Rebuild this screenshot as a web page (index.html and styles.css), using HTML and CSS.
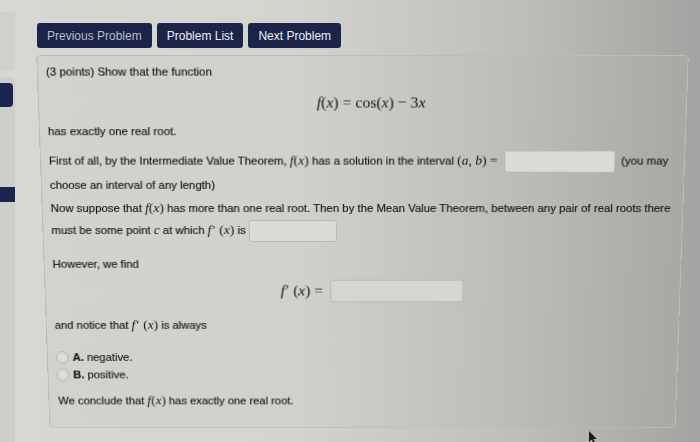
FILE: index.html
```html
<!DOCTYPE html>
<html>
<head>
<meta charset="utf-8">
<link rel="stylesheet" href="styles.css">
</head>
<body>
<div class="page">
  <aside class="side">
    <div class="side-top"></div>
    <div class="side-panel">
      <div class="side-tab"></div>
      <div class="side-bar"></div>
    </div>
  </aside>
  <main class="main">
    <nav class="buttons">
      <span class="btn btn-dim">Previous Problem</span>
      <span class="btn">Problem List</span>
      <span class="btn">Next Problem</span>
    </nav>
    <section class="problem">
      <p class="row r1">(3 points) Show that the function</p>
      <p class="display r2"><span class="m md"><i>f</i>(<i>x</i>) = cos(<i>x</i>) − 3<i>x</i></span></p>
      <p class="row r3">has exactly one real root.</p>
      <p class="para p2">First of all, by the Intermediate Value Theorem, <span class="m"><i>f</i>(<i>x</i>)</span> has a solution in the interval <span class="m">(<i>a</i>, <i>b</i>) =</span> <span class="inp inp1"></span> (you may choose an interval of any length)</p>
      <p class="para p3">Now suppose that <span class="m"><i>f</i>(<i>x</i>)</span> has more than one real root. Then by the Mean Value Theorem, between any pair of real roots there must be some point <i class="c">c</i> at which <span class="m"><i>f</i><span class="pr">′</span>(<i>x</i>)</span> is <span class="inp inp2"></span></p>
      <p class="row r4">However, we find</p>
      <p class="r5"><span class="m md"><i>f</i><span class="pr">′</span>(<i>x</i>) =</span><span class="inp inp3"></span></p>
      <p class="row r6">and notice that <span class="m"><i>f</i><span class="pr">′</span>(<i>x</i>)</span> is always</p>
      <div class="choices">
        <label class="choice"><span class="radio"></span><b>A.</b>&nbsp;negative.</label>
        <label class="choice"><span class="radio"></span><b>B.</b>&nbsp;positive.</label>
      </div>
      <p class="row r7">We conclude that <span class="m"><i>f</i>(<i>x</i>)</span> has exactly one real root.</p>
    </section>
  </main>
</div>
<svg class="cursor" width="10" height="14" viewBox="0 0 10 14"><path d="M1 1 L1 12 L3.6 9.6 L5.6 13.4 L7.2 12.6 L5.3 8.9 L8.8 8.9 Z" fill="#1a1a1a"/></svg>
</body>
</html>
```
FILE: styles.css
```css
html, body {
  margin: 0;
  padding: 0;
}
body {
  position: relative;
  width: 700px;
  height: 442px;
  overflow: hidden;
  background: linear-gradient(90deg, #d9d7d3 0%, #d6d4d0 40%, #bdbdb9 75%, #a3a4a1 100%);
  font-family: "Liberation Sans", Arial, sans-serif;
  color: #161616;
}
.page {
  display: grid;
  grid-template-columns: 15px 1fr;
  column-gap: 22px;
  height: 442px;
}
.side {
  display: flex;
  flex-direction: column;
  padding-top: 12px;
  gap: 7px;
}
.side-top {
  height: 58px;
  background: #d2d0cc;
  border-radius: 0 3px 3px 0;
}
.side-panel {
  flex: 1;
  background: #d0cecb;
  border-radius: 0 4px 0 0;
  padding-top: 6px;
  display: flex;
  flex-direction: column;
}
.side-tab {
  height: 24px;
  width: 13px;
  background: #1b2550;
  border-radius: 0 4px 4px 0;
}
.side-bar {
  height: 15px;
  width: 15px;
  margin-top: 80px;
  background: #1b2550;
}
.main {
  padding-top: 23px;
}
.buttons {
  display: flex;
  gap: 5px;
  height: 25px;
}
.btn {
  display: flex;
  align-items: center;
  padding: 0 10px;
  background: #1c2449;
  color: #eef0f4;
  font-size: 12px;
  border-radius: 3px;
}
.btn-dim {
  color: #b9bdcc;
}
.problem {
  margin-top: 10px;
  margin-left: 6px;
  width: 639px;
  height: 375px;
  box-sizing: border-box;
  padding: 7px 3px 0 8px;
  background: linear-gradient(90deg, #d4d2cd 0%, #d2d0cb 40%, #bbbcb8 75%, #a8a9a5 100%);
  border: 1px solid #bebcb7;
  border-radius: 4px;
  font-size: 11.35px;
  -webkit-text-stroke: 0.15px #161616;
  transform: perspective(900px) rotateX(-5.7deg);
  transform-origin: 50% 50%;
}
.problem p {
  margin: 0;
}
.problem .row {
  line-height: 16px;
}
.m {
  font-family: "Liberation Serif", "Times New Roman", serif;
  font-size: 13.5px;
  -webkit-text-stroke: 0;
}
.md {
  font-size: 15.5px;
}
.m i, .c {
  font-style: italic;
}
.pr {
  padding: 0 4px 0 1px;
}
.c {
  font-family: "Liberation Serif", serif;
  font-size: 13px;
  -webkit-text-stroke: 0;
}
.problem .display {
  text-align: center;
  line-height: 16px;
  padding-left: 12px;
}
.problem .r2 { margin-top: 14px; }
.problem .r3 { margin-top: 11px; }
.problem .para {
  line-height: 24px;
}
.problem .p2 { margin-top: 9px; }
.problem .p3 { margin-top: 0; line-height: 22px; }
.problem .r4 { margin-top: 14px; }
.problem .r5 {
  margin-top: 7px;
  height: 24px;
  display: flex;
  justify-content: center;
  align-items: center;
  gap: 7px;
  padding-left: 14px;
}
.problem .r6 { margin-top: 15px; }
.inp {
  display: inline-block;
  vertical-align: middle;
  height: 22px;
  box-sizing: border-box;
  background: #dcdbd7;
  border: 1px solid #b9b8b3;
  border-radius: 3px;
}
.inp1 { width: 110px; margin: 0 3px; }
.inp2 { width: 88px; }
.inp3 { width: 134px; height: 23px; background: #d6d5d1; }
.choices {
  margin-top: 16px;
  padding-left: 0;
  display: flex;
  flex-direction: column;
}
.choice {
  display: flex;
  align-items: center;
  line-height: 18px;
}
.choice b {
  font-weight: bold;
}
.radio {
  width: 11px;
  height: 11px;
  border-radius: 50%;
  border: 1px solid #b3b2ae;
  background: radial-gradient(circle at 50% 40%, #e2e1dd 0%, #d4d3cf 100%);
  margin-right: 4px;
}
.problem .r7 { margin-top: 10px; padding-left: 1px; }
.cursor {
  position: absolute;
  left: 588px;
  top: 430px;
}
```
